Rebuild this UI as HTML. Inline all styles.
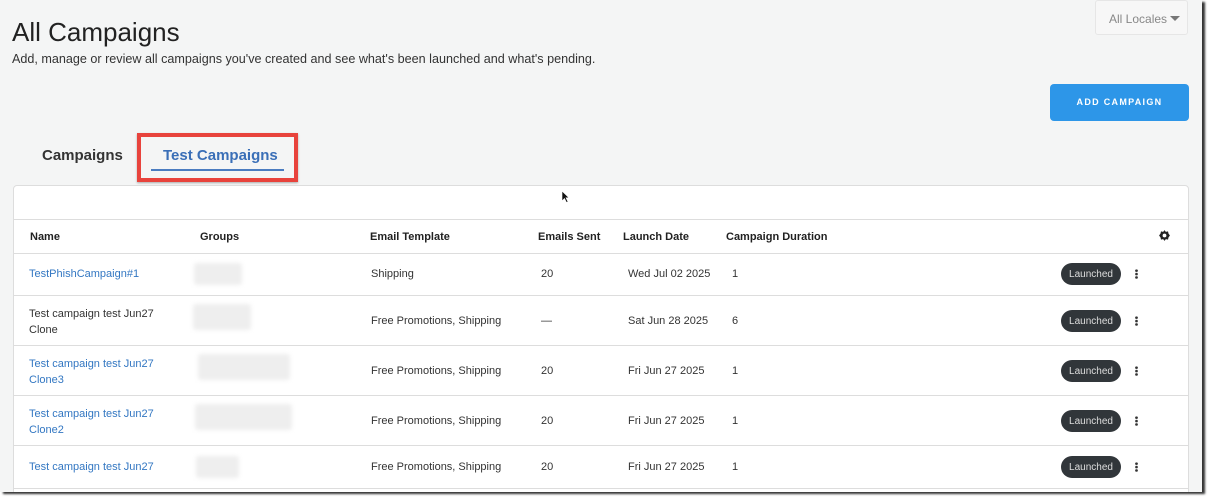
<!DOCTYPE html>
<html><head><style>
*{margin:0;padding:0;box-sizing:border-box}
body{width:1210px;height:502px;background:#fff;position:relative;overflow:hidden;font-family:"Liberation Sans",sans-serif}
#pg{position:absolute;left:0;top:0;width:1202px;height:492px;background:#f4f5f5;box-shadow:3px 2px 2px #333;overflow:hidden}
.a{position:absolute;white-space:nowrap}
.card{position:absolute;left:13px;top:185px;width:1176px;height:320px;background:#fff;border:1px solid #ddd;border-radius:4px}
.hl{position:absolute;left:0;width:100%;height:1px;background:#ddd}
.h{font-size:11px;font-weight:bold;color:#222;top:45px}
.c{font-size:11px;color:#333}
.lk{color:#3377c2}
.pill{position:absolute;left:1047px;width:60px;height:22px;border-radius:11px;background:#31363a;color:#ddd;font-size:10px;display:flex;align-items:center;justify-content:center}
.dots{position:absolute;left:1121px;width:3px;height:10px;background:radial-gradient(circle,#333 1.2px,transparent 1.5px) 0 0/3px 3.4px}
.bl{position:absolute;background:#eee;border-radius:3px;filter:blur(2px)}
</style></head><body>
<div id="pg">
<div class="a" style="left:12px;top:17px;font-size:26px;color:#222">All Campaigns</div>
<div class="a" style="left:12px;top:52px;font-size:12.6px;color:#333">Add, manage or review all campaigns you've created and see what's been launched and what's pending.</div>
<div class="a" style="left:1095px;top:0;width:93px;height:35px;background:#f7f7f7;border:1px solid #e6e6e6;border-radius:3px;font-size:12px;color:#888;padding:11px 0 0 13px">All Locales <span style="display:inline-block;border:5px solid transparent;border-top:5px solid #777;vertical-align:-3px"></span></div>
<div class="a" style="left:1050px;top:84px;width:139px;height:37px;background:#2d96e8;border-radius:4px;color:#fff;font-size:9px;font-weight:bold;letter-spacing:1.3px;text-align:center;line-height:37px">ADD CAMPAIGN</div>
<div class="a" style="left:42px;top:147px;font-size:15px;font-weight:bold;color:#333">Campaigns</div>
<div class="a" style="left:137px;top:133px;width:161px;height:49px;border:4px solid #e8433c;box-shadow:0 1px 2px rgba(0,0,0,.3)"></div>
<div class="a" style="left:163px;top:147px;font-size:15px;font-weight:bold;color:#3a6fb7">Test Campaigns</div>
<div class="a" style="left:151px;top:169px;width:133px;height:2px;background:#4a7cc0"></div>
<div class="card">
<div class="hl" style="top:33px"></div>
<div class="hl" style="top:67px"></div>
<div class="hl" style="top:109px"></div>
<div class="hl" style="top:159px"></div>
<div class="hl" style="top:209px"></div>
<div class="hl" style="top:259px"></div>
<div class="hl" style="top:302px"></div>
<div class="a h" style="left:16px">Name</div>
<div class="a h" style="left:186px">Groups</div>
<div class="a h" style="left:356px">Email Template</div>
<div class="a h" style="left:524px">Emails Sent</div>
<div class="a h" style="left:609px">Launch Date</div>
<div class="a h" style="left:712px">Campaign Duration</div>
<svg class="a" style="left:1144px;top:43px" width="13" height="13" viewBox="0 0 24 24"><path fill="#222" d="M12 2l2.5 3.2 4-.8.8 4L22 12l-2.7 3.6-.8 4-4-.8L12 22l-2.5-3.2-4 .8-.8-4L2 12l2.7-3.6.8-4 4 .8z"/><circle cx="12" cy="12" r="3.5" fill="#fff"/></svg>
<div class="a c lk" style="left:15px;top:82px">TestPhishCampaign#1</div>
<div class="bl" style="left:180px;top:77px;width:48px;height:22px"></div>
<div class="a c" style="left:357px;top:82px">Shipping</div>
<div class="a c" style="left:527px;top:82px">20</div>
<div class="a c" style="left:614px;top:82px">Wed Jul 02 2025</div>
<div class="a c" style="left:718px;top:82px">1</div>
<div class="pill" style="top:77px">Launched</div><div class="dots" style="top:83px"></div>
<div class="a c" style="left:15px;top:120px;line-height:16px">Test campaign test Jun27<br>Clone</div>
<div class="bl" style="left:179px;top:118px;width:58px;height:26px"></div>
<div class="a c" style="left:357px;top:129px">Free Promotions, Shipping</div>
<div class="a c" style="left:527px;top:129px">—</div>
<div class="a c" style="left:614px;top:129px">Sat Jun 28 2025</div>
<div class="a c" style="left:718px;top:129px">6</div>
<div class="pill" style="top:124px">Launched</div><div class="dots" style="top:130px"></div>
<div class="a c lk" style="left:15px;top:170px;line-height:16px">Test campaign test Jun27<br>Clone3</div>
<div class="bl" style="left:184px;top:168px;width:92px;height:26px"></div>
<div class="a c" style="left:357px;top:179px">Free Promotions, Shipping</div>
<div class="a c" style="left:527px;top:179px">20</div>
<div class="a c" style="left:614px;top:179px">Fri Jun 27 2025</div>
<div class="a c" style="left:718px;top:179px">1</div>
<div class="pill" style="top:174px">Launched</div><div class="dots" style="top:180px"></div>
<div class="a c lk" style="left:15px;top:220px;line-height:16px">Test campaign test Jun27<br>Clone2</div>
<div class="bl" style="left:181px;top:218px;width:97px;height:26px"></div>
<div class="a c" style="left:357px;top:229px">Free Promotions, Shipping</div>
<div class="a c" style="left:527px;top:229px">20</div>
<div class="a c" style="left:614px;top:229px">Fri Jun 27 2025</div>
<div class="a c" style="left:718px;top:229px">1</div>
<div class="pill" style="top:224px">Launched</div><div class="dots" style="top:230px"></div>
<div class="a c lk" style="left:15px;top:275px">Test campaign test Jun27</div>
<div class="bl" style="left:182px;top:270px;width:43px;height:22px"></div>
<div class="a c" style="left:357px;top:275px">Free Promotions, Shipping</div>
<div class="a c" style="left:527px;top:275px">20</div>
<div class="a c" style="left:614px;top:275px">Fri Jun 27 2025</div>
<div class="a c" style="left:718px;top:275px">1</div>
<div class="pill" style="top:270px">Launched</div><div class="dots" style="top:276px"></div>
</div>
<svg class="a" style="left:561px;top:190px" width="10" height="14" viewBox="0 0 10 14"><path d="M1 1v10l2.5-2.5 2 4 1.5-.7-2-4H8z" fill="#111" stroke="#fff" stroke-width=".6"/></svg>
</div>
</body></html>
